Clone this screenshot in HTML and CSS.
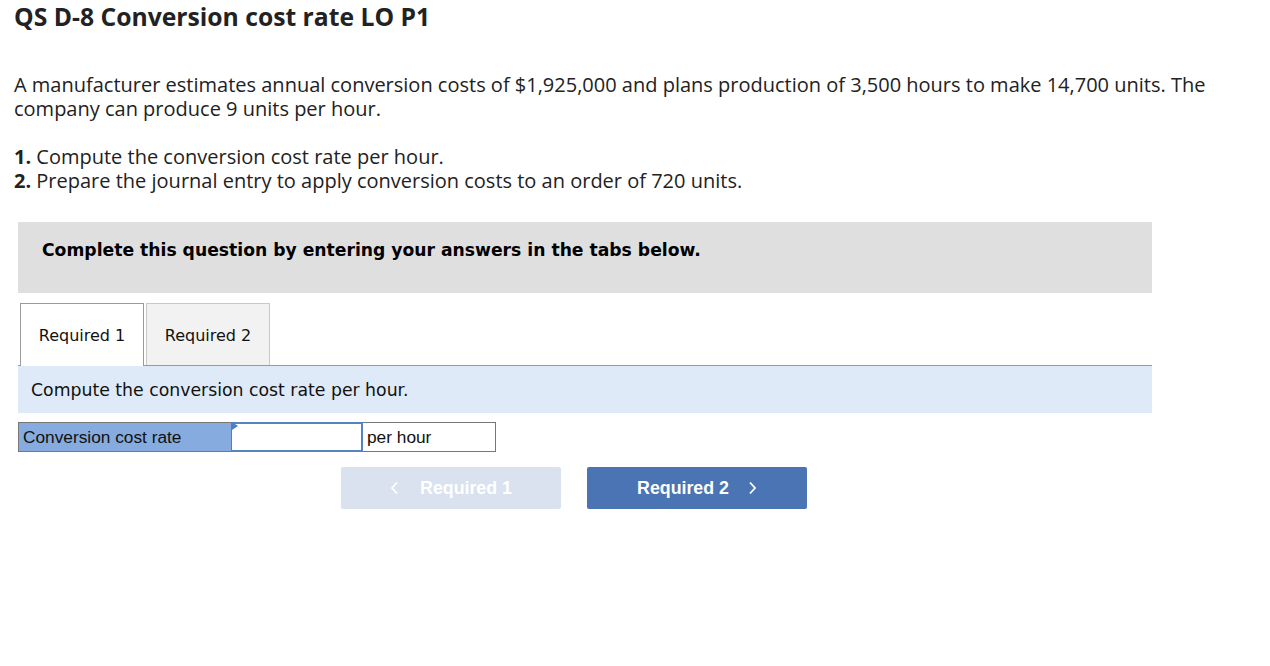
FILE: index.html
```html
<!DOCTYPE html>
<html>
<head>
<meta charset="utf-8">
<link rel="stylesheet" href="styles.css">
</head>
<body>
<div class="page">
  <h1 class="title">QS D-8 Conversion cost rate LO P1</h1>
  <p class="intro">A manufacturer estimates annual conversion costs of $1,925,000 and plans production of 3,500 hours to make 14,700 units. The company can produce 9 units per hour.</p>
  <p class="tasks"><b>1.</b> Compute the conversion cost rate per hour.<br><b>2.</b> Prepare the journal entry to apply conversion costs to an order of 720 units.</p>
  <div class="work">
    <div class="notice">Complete this question by entering your answers in the tabs below.</div>
    <div class="tabs">
      <div class="tab active">Required 1</div>
      <div class="tab">Required 2</div>
    </div>
    <div class="instr">Compute the conversion cost rate per hour.</div>
    <div class="row">
      <div class="cell label">Conversion cost rate</div>
      <div class="cell input"><span class="flag"></span></div>
      <div class="cell unit">per hour</div>
    </div>
    <div class="nav">
      <div class="btn prev"><svg class="chev left" width="9" height="14" viewBox="0 0 9 14"><path d="M7 1.5 L2 7 L7 12.5" fill="none" stroke="#fff" stroke-width="1.8"/></svg>Required 1</div>
      <div class="btn next">Required 2<svg class="chev right" width="9" height="14" viewBox="0 0 9 14"><path d="M2 1.5 L7 7 L2 12.5" fill="none" stroke="#fff" stroke-width="1.8"/></svg></div>
    </div>
  </div>
</div>
</body>
</html>
```
FILE: styles.css
```css
html, body { margin: 0; padding: 0; background: #fff; }
body { font-family: "Open Sans", "Lato", sans-serif; color: #222; }
.page { padding: 0 14px; }
.title { margin: 0; padding-top: 4px; font-size: 24.7px; line-height: 26px; font-weight: 700; color: #222; }
.intro { margin: 43px 0 24px; font-size: 20px; line-height: 24px; }
.tasks { margin: 0; font-size: 20px; line-height: 24px; }
.tasks b { font-weight: 700; }
.work { margin: 29px 0 0 4px; width: 1134px; }
.notice { background: #dfdfdf; height: 71px; box-sizing: border-box; padding: 17px 24px 0; font-family: "DejaVu Sans", Verdana, sans-serif; font-weight: 700; font-size: 17.2px; line-height: 22px; color: #000; }
.tabs { display: flex; gap: 2px; margin-top: 10px; padding-left: 2px; border-bottom: 1px solid #9a9a9a; height: 62px; align-items: flex-end; }
.tab { width: 124px; height: 62px; box-sizing: border-box; border: 1px solid #c8c8c8; border-bottom: none; background: #f2f2f2; font-family: "DejaVu Sans", Verdana, sans-serif; font-size: 16px; color: #111; display: flex; align-items: center; justify-content: center; padding-top: 1px; }
.tab.active { background: #fff; border-color: #9a9a9a; height: 63px; margin-bottom: -1px; }
.instr { background: #deeaf7; height: 47px; box-sizing: border-box; padding-left: 13px; display: flex; align-items: center; font-family: "DejaVu Sans", Verdana, sans-serif; font-size: 17.3px; color: #111; }
.row { display: flex; margin-top: 9px; height: 30px; }
.cell { box-sizing: border-box; height: 30px; font-family: "Liberation Sans", Arial, sans-serif; font-size: 17.3px; color: #111; display: flex; align-items: center; }
.label { width: 213px; background: #85abdf; border: 1px solid #777; border-right: none; padding-left: 4px; }
.input { width: 132px; border: 2px solid #5584c0; border-left: 1px solid #777; position: relative; background: #fff; }
.flag { position: absolute; left: 0; top: -2px; width: 0; height: 0; border-top: 4px solid transparent; border-bottom: 4px solid transparent; border-left: 6px solid #4a7fc4; }
.unit { width: 133px; border: 1px solid #777; border-left: none; padding-left: 4px; }
.nav { display: flex; gap: 26px; margin-top: 15px; padding-left: 323px; }
.btn { width: 220px; height: 42px; border-radius: 2px; display: flex; align-items: center; justify-content: center; font-family: "Liberation Sans", Arial, sans-serif; font-weight: 700; font-size: 17.8px; color: #fff; }
.prev { background: #d9e2ee; }
.next { background: #4a74b3; }
.chev { display: block; }
.chev.left { margin-right: 21px; }
.chev.right { margin-left: 19px; }
```
